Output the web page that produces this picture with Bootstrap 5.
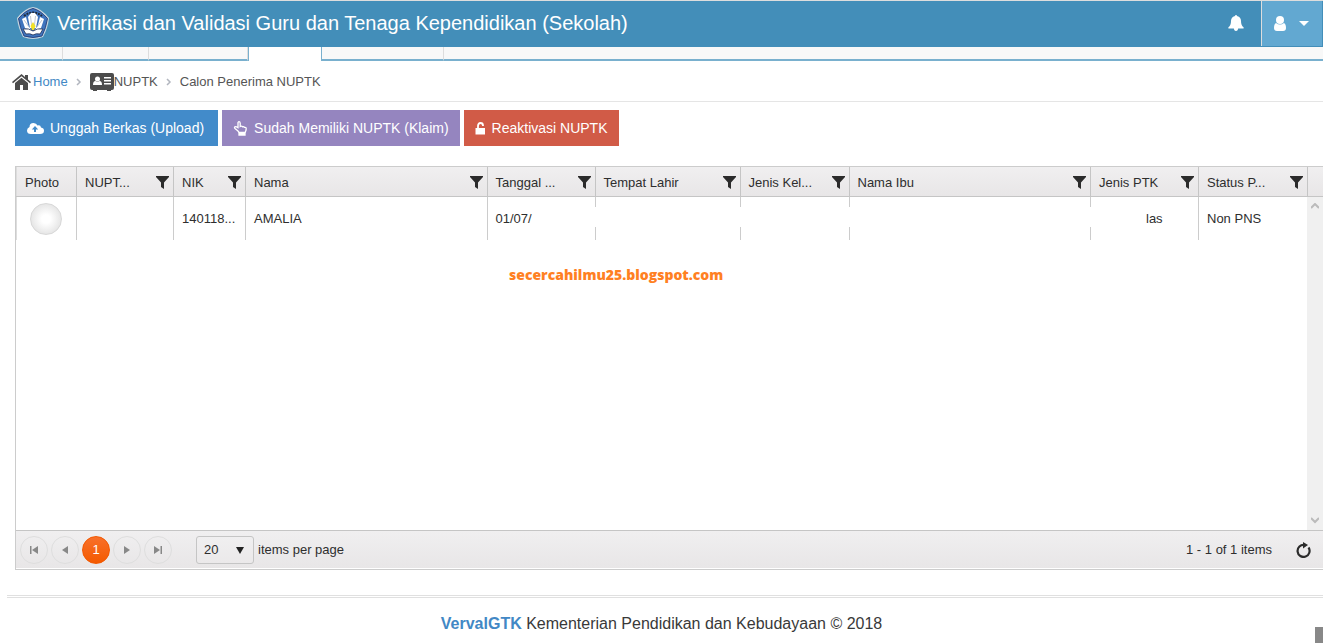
<!DOCTYPE html>
<html lang="id">
<head>
<meta charset="utf-8">
<meta name="viewport" content="width=device-width, initial-scale=1">
<title>Verifikasi dan Validasi Guru dan Tenaga Kependidikan (Sekolah)</title>
<link href="https://cdn.jsdelivr.net/npm/bootstrap@5.3.0/dist/css/bootstrap.min.css" rel="stylesheet">
<style>
body{font-family:"Liberation Sans",Arial,sans-serif;font-size:13px;line-height:20px;color:#393939;background:#fff;overflow-x:hidden}
a{color:#4288c5;text-decoration:none}
svg{display:block;flex:none}
.app-bar{background:#438eb9;border-top:1px solid #ddd;height:47px;padding:0}
.app-title{font-size:20px;color:#fff;gap:7px;line-height:24px;padding-bottom:2px}
.bar-btn{border:0;background:none;color:#fff;height:44px;padding:0 17px}
.bar-user{background:#62a8d1;border-left:1px solid #ddd;border-right:1px solid #438eb9;width:62px;padding:0 13px 0 12px;height:45px}
.tabs-strip{height:14px}
.tabs-strip a{background:#f8f8f8;border-bottom:2px solid #79b0ce;border-right:1px solid #ddd}
.tabs-strip a.current{background:#fff;border:1px solid #79b0ce;border-width:0 1px}
.tabs-strip a:last-child{border-right:0}
.tab-a{width:63px}.tab-b{width:86px}.tab-c{width:99px}.tab-d{width:74px}.tab-e{width:122px}
.crumbs{height:41px;border-bottom:1px solid #e5e5e5;padding:1px 0 0 12px;color:#555}
.crumbs ol{gap:8px}
.crumbs li,.crumbs a{display:flex;align-items:center;gap:2px}
.actions{padding:8px 0 0 15px;gap:4px}
.actions .btn{border:0;border-radius:0;color:#fff;font-size:14px;line-height:20px;height:36px;padding:0 11px;gap:6px}
.actions .btn-upload{background:#428bca;padding:0 14px 0 12px}
.actions .btn-claim{background:#9585bf}.actions .btn-react{background:#d15b47}
.data-grid{margin:20px 0 0 15px;border:1px solid #ccc;border-right:0;padding-bottom:1px;color:#2e2e2e}
.data-grid table{table-layout:fixed;width:100%;border-collapse:separate;border-spacing:0}
.grid-head{background:linear-gradient(#f0eff0,#e8e6e7);border-bottom:1px solid #c5c5c5}
.data-grid th{height:29px;padding:2px 4px 0 8px;font-weight:400;border-left:1px solid #c5c5c5}
.data-grid th:first-child,.data-grid td:first-child{border-left-color:#ddd}
.data-grid td{height:43px;padding:0 8px;border-left:1px solid #ccc;white-space:nowrap}
.data-grid td.blanked{border-left:0;background:linear-gradient(#ccc 10px,#fff 10px,#fff 30px,#ccc 30px) left/1px 100% no-repeat}
.w-photo{width:60px}.w-nuptk{width:97px}.w-nik{width:72px}.w-std{width:109px}.w-date{width:108px}.w-place{width:145px}.w-bar{width:16px}
.flt{border:0;background:none;padding:0}
.grid-body{height:333px}
.avatar{width:32px;height:32px;border-radius:50%;border:1px solid #d8d8d8;background:radial-gradient(#fff 20%,#e4e4e4 75%);margin:0 5px}
.data-grid td.tail{padding-left:56px}
.vbar{width:16px;background:#f0f0f0;padding:6px 4px}
.watermark{font-family:"Open Sans",sans-serif;font-weight:800;font-size:14px;color:#ff8022;margin:25px 0 0 493px}
.pager{height:38px;background:linear-gradient(#f0eff0,#e8e6e7);border-top:1px solid #c5c5c5;padding:0 12px 0 4px}
.pg-list{gap:3px;margin-right:24px}
.pg{width:28px;height:28px;border-radius:50%;border:1px solid #dedede;background:none;padding:0;display:flex;align-items:center;justify-content:center;color:#888}
.pg.on{background:linear-gradient(#f8702a,#f45a00);border-color:#f35800;color:#fff}
.page-size{width:58px;height:28px;border:1px solid #c5c5c5;border-radius:3px;color:#2e2e2e;appearance:none;padding:0 7px;background:linear-gradient(#f0eff0,#ebe9ea)}
.size-box svg{position:absolute;right:9px;top:11px;pointer-events:none}
.foot{margin:25px 0 0 7px;border-top:3px double #e0e0e0;padding:14px 7px 0 0;font-size:16px;line-height:24px}
.to-top{position:fixed;right:0;bottom:0;width:8px;height:16px;background:#888;border:0;padding:0}
</style>
</head>
<body>
<header class="app-bar navbar flex-nowrap align-items-stretch justify-content-between">
  <a class="app-title d-flex align-items-center ps-3" href="#">
    <svg width="34" height="34" viewBox="0 0 34 34" aria-hidden="true">
      <path d="M17 1Q25 2 33 12Q32 22 27 31Q17 35 7 31Q2 22 1 12Q9 2 17 1Z" fill="#c5d5df"/>
      <path d="M17 2.500Q24 4 31.500 12.500Q30 22 26 30Q17 33 8 30Q4 22 2.500 12.500Q10 4 17 2.500Z" fill="#3f74bd" stroke="#2a4580"/>
      <path d="M8 10Q17 3 26 10" fill="none" stroke="#222b39" stroke-width="2" stroke-dasharray="2 1"/>
      <path d="M6 13l4-2 2 8 3 5-6-2zM28 13l-4-2-2 8-3 5 6-2zM15 7h4l3 4-2 11h-6l-2-11z" fill="#fff"/>
      <path d="M14.500 10l1 9M19.500 10l-1 9M8 14l5 7M26 14l-5 7" stroke="#a5afbc" stroke-width=".7"/>
      <path d="M7 23q6-1 10 2 4-3 10-2l-3 5q-4-1-7 1-3-2-7-1z" fill="#fff" stroke="#253052" stroke-width=".8"/>
      <path d="M17 16l2.500 4-1.500 4h-2l-1.500-4z" fill="#f1e128"/>
    </svg>
    <span>Verifikasi dan Validasi Guru dan Tenaga Kependidikan (Sekolah)</span>
  </a>
  <div class="d-flex">
    <button class="bar-btn d-flex align-items-center" aria-label="Notifikasi">
      <svg width="16" height="16" viewBox="0 0 16 16" fill="currentColor"><path d="M7 1a1 1 0 0 1 2 0c3 .5 4 3 4 5 0 3 .8 5 2.600 6.200V13.500H.4v-1.300C2.200 11 3 9 3 6c0-2 1-4.500 4-5zM6 13h4.200q-.2 3-2.200 3t-2.200-3z"/></svg>
    </button>
    <button class="bar-btn bar-user d-flex align-items-center justify-content-between" aria-label="Akun">
      <svg width="12" height="15" viewBox="0 0 12 15" fill="currentColor"><circle cx="6" cy="4" r="4"/><path d="M2 7q4 3 8 0 2 1 2 5 0 3-3 3H3q-3 0-3-3 0-4 2-5z"/></svg>
      <svg width="10" height="5" viewBox="0 0 10 5" fill="currentColor"><path d="M0 0h10L5 5z"/></svg>
    </button>
  </div>
</header>
<nav class="tabs-strip d-flex" aria-label="Menu">
  <a class="tab-a" href="#" aria-label="Menu 1"></a><a class="tab-b" href="#" aria-label="Menu 2"></a><a class="tab-c" href="#" aria-label="Menu 3"></a><a class="tab-d current" href="#" aria-label="Menu 4"></a><a class="tab-e" href="#" aria-label="Menu 5"></a><a class="flex-fill" href="#" aria-label="Menu 6"></a>
</nav>
<nav class="crumbs d-flex align-items-center" aria-label="Breadcrumb">
  <ol class="list-unstyled d-flex align-items-center mb-0">
    <li><svg width="19" height="16" viewBox="0 0 19 16" fill="#4c4c4c"><path d="M0 8L9.500 0 13 3V1h3v4.500L19 8l-1 1.200-8.500-7L1 9.200z"/><path d="M3 9l6.500-5.300L16 9v7h-5v-5H8v5H3z"/></svg><a href="#">Home</a></li>
    <li><svg width="6" height="8" viewBox="0 0 6 8" fill="none" stroke="#b2b6bf" stroke-width="1.500"><path d="M1 1l3 3-3 3"/></svg></li>
    <li class="gap-0"><svg width="24" height="18" viewBox="0 0 24 18"><path d="M2 0h20q2 0 2 2v13q0 2-2 2h-1v1h-4v-1H7v1H3v-1H2q-2 0-2-2V2q0-2 2-2z" fill="#4c4c4c"/><circle cx="7.500" cy="6" r="2.500" fill="#fff"/><path d="M3 12q0-4 2.500-4 2 1.500 4 0Q12 8 12 12zM14 4h7v1.500h-7zM14 7h7v1.500h-7zM14 10h7v1.500h-7z" fill="#fff"/></svg><span>NUPTK</span></li>
    <li><svg width="6" height="8" viewBox="0 0 6 8" fill="none" stroke="#b2b6bf" stroke-width="1.500"><path d="M1 1l3 3-3 3"/></svg></li>
    <li aria-current="page">Calon Penerima NUPTK</li>
  </ol>
</nav>
<main>
  <div class="actions d-flex">
    <button class="btn btn-upload d-flex align-items-center"><svg width="17" height="13" viewBox="0 0 17 13"><path d="M4 12Q0 12 0 8.500 0 6 2.500 5 2.500 1 6.500 1 9.500 1 10.500 3.500q3-1 3.500 2 3 .5 3 3.200Q17 12 13 12z" fill="#fff"/><path d="M8 4l3.200 3.500H9V10H7V7.500H4.800z" fill="#428bca"/></svg><span>Unggah Berkas (Upload)</span></button>
    <button class="btn btn-claim d-flex align-items-center"><svg width="15" height="15" viewBox="0 0 15 15" fill="none" stroke="#fff" stroke-width="1.300"><path d="M5 10L2 7.500q-1-1 0-1.700 1-.5 3 .8V2q0-1.300 1-1.300T7.200 2v3.500q1.500-1 2.200.3 1.400-.5 2 .5 1.800-.2 1.800 1.500 0 1.700-1 3.500H6z"/><path d="M6 12h6v2H6z" fill="#fff"/></svg><span>Sudah Memiliki NUPTK (Klaim)</span></button>
    <button class="btn btn-react d-flex align-items-center"><svg width="11" height="13" viewBox="0 0 11 13"><path d="M3 6V4q0-3 2.500-3T8 3.500V4" fill="none" stroke="#fff" stroke-width="1.800"/><path d="M.5 6H10v6.500H.5z" fill="#fff"/></svg><span>Reaktivasi NUPTK</span></button>
  </div>

  <section class="data-grid">
    <svg width="0" height="0" class="position-absolute" aria-hidden="true"><symbol id="funnel" viewBox="0 0 13 13"><path d="M0 0h13v1L8 6.500V13l-3-2V6.500L0 1z" fill="#2b2b2b"/></symbol></svg>
    <div class="grid-head">
      <table>
        <colgroup><col class="w-photo"><col class="w-nuptk"><col class="w-nik"><col><col class="w-date"><col class="w-place"><col class="w-std"><col><col class="w-date"><col class="w-std"><col class="w-bar"></colgroup>
        <thead><tr>
          <th>Photo</th>
          <th><div class="d-flex justify-content-between"><span class="text-nowrap">NUPT...</span><button class="flt" aria-label="Filter NUPTK"><svg width="13" height="13"><use href="#funnel"/></svg></button></div></th>
          <th><div class="d-flex justify-content-between"><span>NIK</span><button class="flt" aria-label="Filter NIK"><svg width="13" height="13"><use href="#funnel"/></svg></button></div></th>
          <th><div class="d-flex justify-content-between"><span>Nama</span><button class="flt" aria-label="Filter Nama"><svg width="13" height="13"><use href="#funnel"/></svg></button></div></th>
          <th><div class="d-flex justify-content-between"><span class="text-nowrap">Tanggal ...</span><button class="flt" aria-label="Filter Tanggal Lahir"><svg width="13" height="13"><use href="#funnel"/></svg></button></div></th>
          <th><div class="d-flex justify-content-between"><span>Tempat Lahir</span><button class="flt" aria-label="Filter Tempat Lahir"><svg width="13" height="13"><use href="#funnel"/></svg></button></div></th>
          <th><div class="d-flex justify-content-between"><span class="text-nowrap">Jenis Kel...</span><button class="flt" aria-label="Filter Jenis Kelamin"><svg width="13" height="13"><use href="#funnel"/></svg></button></div></th>
          <th><div class="d-flex justify-content-between"><span>Nama Ibu</span><button class="flt" aria-label="Filter Nama Ibu"><svg width="13" height="13"><use href="#funnel"/></svg></button></div></th>
          <th><div class="d-flex justify-content-between"><span>Jenis PTK</span><button class="flt" aria-label="Filter Jenis PTK"><svg width="13" height="13"><use href="#funnel"/></svg></button></div></th>
          <th><div class="d-flex justify-content-between"><span class="text-nowrap">Status P...</span><button class="flt" aria-label="Filter Status"><svg width="13" height="13"><use href="#funnel"/></svg></button></div></th>
          <th class="p-0"></th>
        </tr></thead>
      </table>
    </div>
    <div class="grid-body d-flex">
      <div class="flex-fill">
        <table>
          <colgroup><col class="w-photo"><col class="w-nuptk"><col class="w-nik"><col><col class="w-date"><col class="w-place"><col class="w-std"><col><col class="w-date"><col class="w-std"></colgroup>
          <tbody><tr>
            <td><div class="avatar"></div></td><td></td><td>140118...</td><td>AMALIA</td><td>01/07/</td>
            <td class="blanked"></td><td class="blanked"></td><td class="blanked"></td><td class="blanked tail">las</td><td>Non PNS</td>
          </tr></tbody>
        </table>
        <p class="watermark mb-0">secercahilmu25.blogspot.com</p>
      </div>
      <div class="vbar d-flex flex-column justify-content-between" aria-hidden="true">
        <svg width="8" height="7" viewBox="0 0 8 7" fill="none" stroke="#bbb" stroke-width="2"><path d="M0 5l4-4 4 4"/></svg>
        <svg width="8" height="7" viewBox="0 0 8 7" fill="none" stroke="#bbb" stroke-width="2"><path d="M0 1l4 4 4-4"/></svg>
      </div>
    </div>
    <div class="pager d-flex align-items-center justify-content-between">
      <div class="d-flex align-items-center">
        <div class="pg-list d-flex">
          <button class="pg" aria-label="First page"><svg width="8" height="8" viewBox="0 0 8 8" fill="currentColor"><path d="M0 0h1.500v8H0zM8 0v8L2 4z"/></svg></button>
          <button class="pg" aria-label="Previous page"><svg width="6" height="8" viewBox="0 0 6 8" fill="currentColor"><path d="M6 0v8L0 4z"/></svg></button>
          <button class="pg on" aria-current="page">1</button>
          <button class="pg" aria-label="Next page"><svg width="6" height="8" viewBox="0 0 6 8" fill="currentColor"><path d="M0 0v8l6-4z"/></svg></button>
          <button class="pg" aria-label="Last page"><svg width="8" height="8" viewBox="0 0 8 8" fill="currentColor"><path d="M6.500 0H8v8H6.500zM0 0v8l6-4z"/></svg></button>
        </div>
        <div class="size-box position-relative me-1"><select class="page-size" id="pageSize"><option>20</option><option>50</option></select><svg width="10" height="7" viewBox="0 0 10 7" fill="#222"><path d="M1 0h8L5 7z"/></svg></div>
        <label for="pageSize">items per page</label>
      </div>
      <div class="d-flex align-items-center gap-4">
        <span>1 - 1 of 1 items</span>
        <button class="flt" aria-label="Refresh"><svg width="15" height="16" viewBox="0 0 15 16"><path d="M8.500 3A6 6 0 1 0 12.500 5.500" fill="none" stroke="#2b2b2b" stroke-width="2.200"/><path d="M7 0l5 3-5 3.500z" fill="#2b2b2b"/></svg></button>
      </div>
    </div>
  </section>
</main>
<footer class="foot text-center"><a class="fw-bold" href="#">VervalGTK</a> Kementerian Pendidikan dan Kebudayaan © 2018</footer>
<button class="to-top" aria-label="Ke atas"></button>
<script src="https://cdn.jsdelivr.net/npm/bootstrap@5.3.0/dist/js/bootstrap.bundle.min.js"></script>
</body>
</html>
